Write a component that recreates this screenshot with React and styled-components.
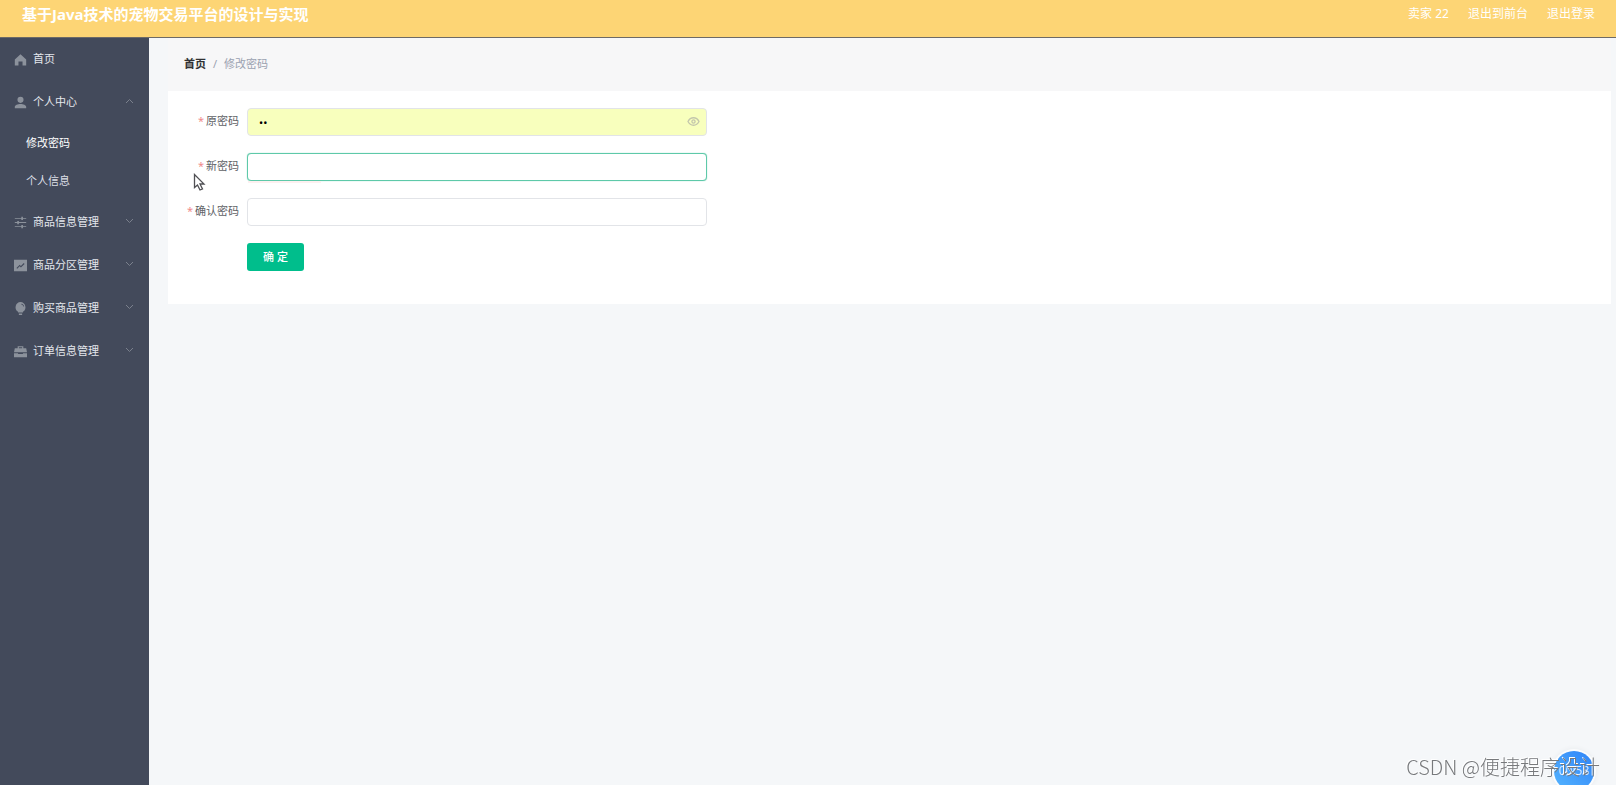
import React from "react";
import styled, { createGlobalStyle } from "styled-components";

const GlobalStyle = createGlobalStyle`
  * {
    box-sizing: border-box;
  }

  body {
    margin: 0;
    background: #f5f7f9;
    font-family: "Noto Sans", "Noto Sans CJK SC", sans-serif;
    font-size: 11px;
  }
`;

const Page = styled.div`
  display: flex;
  flex-direction: column;
  min-height: 100vh;
`;

const Header = styled.header`
  display: flex;
  justify-content: space-between;
  align-items: center;
  height: 38px;
  padding: 0 21px 9px 22px;
  background: #fdd575;
  border-bottom: 1px solid #6d6a66;
  color: #fff;
`;

const Title = styled.h1`
  margin: 0;
  font-size: 15px;
  font-weight: 700;
  line-height: 20px;
`;

const HeaderNav = styled.nav`
  display: flex;
  gap: 19px;
  font-size: 12px;
  line-height: 20px;

  a {
    color: inherit;
    text-decoration: none;
  }
`;

const Body = styled.div`
  display: flex;
  flex: 1;
`;

const Sidebar = styled.nav`
  flex: none;
  width: 149px;
  background: #434a5b;
  color: #e4e7ed;
`;

const MenuItem = styled.a`
  display: flex;
  align-items: center;
  gap: 6px;
  height: 43px;
  padding: 0 15px 0 14px;
  color: inherit;
  text-decoration: none;

  span {
    flex: 1;
    padding-bottom: 3px;
  }
`;

const SubMenu = styled.div`
  padding-bottom: 1px;
`;

const SubItem = styled.a`
  display: flex;
  align-items: center;
  height: 38px;
  padding: 0 0 3px 26px;
  color: ${(props) => (props.$active ? "#fff" : "#dcdfe6")};
  text-decoration: none;
`;

const Icon = styled.svg`
  flex: none;
  width: 13px;
  height: 13px;
  fill: #8c929c;
`;

const Chevron = styled.svg`
  width: 9px;
  height: 6px;
  margin-bottom: 3px;
  fill: none;
  stroke: #7b818d;
`;

const Main = styled.main`
  flex: 1;
  padding: 0 5px 0 19px;
`;

const Breadcrumb = styled.div`
  display: flex;
  gap: 7px;
  height: 53px;
  padding: 18px 16px 0;
  background: #f7f7f8;
  color: #9aa1b0;
  line-height: 16px;

  a {
    color: #303133;
    font-weight: 700;
    text-decoration: none;
  }
`;

const Form = styled.form`
  display: flex;
  flex-direction: column;
  gap: 17px;
  padding: 17px 16px 33px;
  background: #fff;
`;

const Field = styled.div`
  display: flex;
  align-items: center;
  height: 28px;
`;

const Label = styled.label`
  width: 63px;
  padding: 0 8px 2px 0;
  color: #606266;
  line-height: 16px;
  text-align: right;
  white-space: nowrap;

  &::before {
    content: "*";
    margin-right: 2px;
    color: #f08a8a;
  }
`;

const InputWrap = styled.div`
  position: relative;
  width: 460px;
  height: 28px;
`;

const Input = styled.input`
  width: 100%;
  height: 100%;
  padding: 0 11px;
  border: 1px solid ${(props) => (props.$active ? "#5ec9a9" : "#e2e4e8")};
  border-radius: 4px;
  outline: none;
  background: ${(props) => (props.$filled ? "#f8ffbd" : "#fff")};
  box-shadow: ${(props) => (props.$active ? "0 0 1px #5ec9a9" : "none")};
  font-family: inherit;
  font-size: 11px;
`;

// top edge of the validation message while it fades in
const ErrorHint = styled.div`
  position: absolute;
  top: 100%;
  left: 1px;
  width: 73px;
  height: 2px;
  background: #fdf0f0;
`;

const Eye = styled.svg`
  position: absolute;
  top: 9px;
  right: 7px;
  width: 13px;
  height: 9px;
  fill: none;
  stroke: #c3c6ac;
  stroke-width: 1.3;
`;

const Submit = styled.button`
  width: 57px;
  height: 28px;
  margin-left: 63px;
  padding: 0 0 2px;
  border: 0;
  border-radius: 3px;
  background: #00be8c;
  color: #fff;
  font-family: inherit;
  font-size: 11px;
  font-weight: 500;
`;

const Cursor = styled.svg`
  position: absolute;
  top: 173px;
  left: 193px;
  width: 13px;
  height: 19px;
  fill: #fff;
  stroke: #505054;
  stroke-width: 1.3;
`;

const Clock = styled.div`
  position: fixed;
  right: 22px;
  bottom: -6px;
  width: 40px;
  height: 40px;
  border-radius: 50%;
  background: linear-gradient(45deg, #55b5ff, #2f83f7);
  box-shadow: 0 0 0 2px #fbfcfd, 0 0 5px 2px #e6e9ec;
  color: #d8eaff;
  font-size: 12px;
  line-height: 39px;
  text-align: center;
`;

const Watermark = styled.div`
  position: fixed;
  right: 16px;
  bottom: 4px;
  color: #77797c;
  font-family: "Noto Sans CJK SC", sans-serif;
  font-size: 20px;
  font-weight: 300;
  line-height: 28px;
  text-shadow: -1px -1px 0 #fff;
`;

const icons = {
  home: <path d="M8 1.500 1 8v7.500h4.500V10.500h5v5H15V8z" />,
  user: <path d="M8 1a3.500 3.500 0 0 1 0 7.500A3.500 3.500 0 0 1 8 1zM1 13.500c0-5 14-5 14 0V15H1z" />,
  sliders: <path d="M1 2.500h8V1h2v1.500h4v1h-4V5H9V3.500H1zM1 7.500h3V6h2v1.500h9v1H6V10H4V8.500H1zM1 12.500h8V11h2v1.500h4v1h-4V15H9v-1.500H1z" />,
  chart: <path fillRule="evenodd" d="M0 1h16v14H0zm3 10 1 1 3-3 1.500 1.500L13 6l-1-1-3.500 3.500L7 7z" />,
  bulb: <path fillRule="evenodd" d="M8 0a6.500 6.500 0 0 1 3 12v1H5v-1A6.500 6.500 0 0 1 8 0zm1 2v1c1.500.3 2.200 1 2.500 2.500h1C12.200 3.500 11 2.300 9 2zM6 14h4v2H6z" />,
  briefcase: <path fillRule="evenodd" d="M4.500 4V1.500h7V4H15l1 5H0l1-5zM6 2.800V4h4V2.800zM0 10h5v1h6v-1h5v5H0z" />,
};

const menus = [
  { label: "商品信息管理", icon: "sliders" },
  { label: "商品分区管理", icon: "chart" },
  { label: "购买商品管理", icon: "bulb" },
  { label: "订单信息管理", icon: "briefcase" },
];

const MenuEntry = ({ icon, label, arrow }) => (
  <MenuItem href="#">
    <Icon viewBox="0 0 16 16">{icons[icon]}</Icon>
    <span>{label}</span>
    {arrow && (
      <Chevron viewBox="0 0 9 6">
        <path d={arrow === "up" ? "M1 5 4.500 1.500 8 5" : "M1 1 4.500 4.500 8 1"} />
      </Chevron>
    )}
  </MenuItem>
);

export default function App() {
  return (
    <Page>
      <GlobalStyle />
      <Header>
        <Title>基于Java技术的宠物交易平台的设计与实现</Title>
        <HeaderNav>
          <span>卖家 22</span>
          <a href="#">退出到前台</a>
          <a href="#">退出登录</a>
        </HeaderNav>
      </Header>
      <Body>
        <Sidebar>
          <MenuEntry icon="home" label="首页" />
          <MenuEntry icon="user" label="个人中心" arrow="up" />
          <SubMenu>
            <SubItem href="#" $active>修改密码</SubItem>
            <SubItem href="#">个人信息</SubItem>
          </SubMenu>
          {menus.map((item) => (
            <MenuEntry key={item.label} icon={item.icon} label={item.label} arrow="down" />
          ))}
        </Sidebar>
        <Main>
          <Breadcrumb>
            <a href="#">首页</a>
            <span>/</span>
            <span>修改密码</span>
          </Breadcrumb>
          <Form onSubmit={(e) => e.preventDefault()}>
            <Field>
              <Label htmlFor="old">原密码</Label>
              <InputWrap>
                <Input id="old" type="password" defaultValue="22" $filled />
                <Eye viewBox="0 0 13 9">
                  <path d="M1 4.500c2.500-5 8.500-5 11 0-2.500 5-8.500 5-11 0z" />
                  <circle cx="6.500" cy="4.500" r="1.600" />
                </Eye>
              </InputWrap>
            </Field>
            <Field>
              <Label htmlFor="new">新密码</Label>
              <InputWrap>
                <Input id="new" type="password" $active />
                <ErrorHint />
              </InputWrap>
            </Field>
            <Field>
              <Label htmlFor="confirm">确认密码</Label>
              <InputWrap>
                <Input id="confirm" type="password" />
              </InputWrap>
            </Field>
            <Submit type="submit">确 定</Submit>
          </Form>
        </Main>
      </Body>
      <Cursor viewBox="0 0 13 19">
        <path d="M1.500 1.500v13l3-2.500 2.500 5 2.500-1-2.500-5h4z" />
      </Cursor>
      <Clock>00:58</Clock>
      <Watermark>CSDN @便捷程序设计</Watermark>
    </Page>
  );
}
